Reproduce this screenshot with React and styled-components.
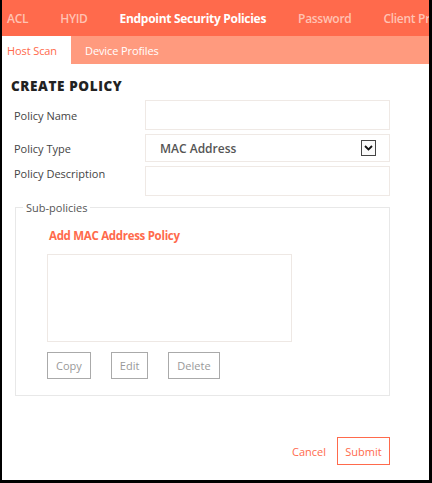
import React from "react";
import styled, { createGlobalStyle } from "styled-components";

const ORANGE = "#ff6a4c";
const PEACH = "#ff9a7e";

const GlobalStyle = createGlobalStyle`
  html, body {
    margin: 0;
    padding: 0;
    background: #fff;
  }
  * {
    box-sizing: border-box;
  }
  body {
    font-family: "Open Sans", "Noto Sans", sans-serif;
  }
`;

const Frame = styled.div`
  width: 432px;
  height: 483px;
  border-left: 2px solid #000;
  border-right: 3px solid #000;
  border-bottom: 3px solid #000;
  background: #fff;
  overflow: hidden;
  display: flex;
  flex-direction: column;
`;

const TopNav = styled.nav`
  height: 36px;
  background: ${ORANGE};
  display: flex;
  align-items: center;
  gap: 32px;
  padding: 0 5px;
  white-space: nowrap;
  overflow: hidden;
`;

const NavItem = styled.span`
  font-size: 12px;
  letter-spacing: -0.3px;
  font-weight: ${(p) => (p.$active ? 700 : 600)};
  color: ${(p) => (p.$active ? "#fff" : "#ffc2b3")};
`;

const SubNav = styled.div`
  height: 28px;
  background: ${PEACH};
  display: flex;
`;

const SubTab = styled.span`
  display: flex;
  align-items: center;
  padding: 0 14px;
  font-size: 11px;
  letter-spacing: -0.1px;
  color: ${(p) => (p.$active ? ORANGE : "#fff")};
  background: ${(p) => (p.$active ? "#fff" : "transparent")};
  &:first-child {
    padding-left: 5px;
  }
`;

const Form = styled.form`
  flex: 1;
  display: flex;
  flex-direction: column;
  padding: 14px 39px 0 12px;
`;

const Title = styled.h2`
  margin: 0 0 6px -3px;
  font-size: 13.5px;
  font-weight: 800;
  letter-spacing: 0.6px;
  color: #222;
  line-height: 16px;
`;

const Fields = styled.div`
  display: grid;
  grid-template-columns: 131px 1fr;
  row-gap: 4px;
`;

const Label = styled.label`
  font-size: 11px;
  color: #444;
  align-self: ${(p) => (p.$top ? "start" : "center")};
`;

const TextInput = styled.div`
  height: 30px;
  border: 1px solid #efe9e5;
  background: #fff;
`;

const Select = styled.div`
  height: 28px;
  border: 1px solid #efe9e5;
  display: flex;
  align-items: center;
  justify-content: space-between;
  padding: 0 13px 0 14px;
  font-size: 12px;
  font-weight: 600;
  color: #555;
`;

const Caret = styled.span`
  width: 15px;
  height: 16px;
  border: 1px solid #444;
  display: flex;
  align-items: center;
  justify-content: center;
  background: #fafafa;
`;

const Fieldset = styled.fieldset`
  margin: 4px 0 0 1px;
  padding: 0;
  border: 1px solid #e8e8e8;
  height: 196px;
`;

const Legend = styled.legend`
  margin-left: 7px;
  padding: 0 3px;
  font-size: 11px;
  color: #555;
`;

const SubBody = styled.div`
  padding: 17px 0 0 33px;
`;

const SubHeading = styled.div`
  font-size: 11.5px;
  letter-spacing: -0.3px;
  font-weight: 700;
  color: ${ORANGE};
  margin: -4px 0 10px 0;
  line-height: 16px;
`;

const ListBox = styled.div`
  width: 245px;
  height: 88px;
  margin-left: -2px;
  border: 1px solid #eee8e4;
`;

const ButtonRow = styled.div`
  display: flex;
  gap: 20px;
  margin: 10px 0 0 -2px;
`;

const GhostButton = styled.button`
  height: 27px;
  padding: 0 8px;
  border: 1px solid #aaa;
  background: #fff;
  color: #999;
  font-family: inherit;
  font-size: 11px;
`;

const Actions = styled.div`
  display: flex;
  justify-content: flex-end;
  align-items: center;
  gap: 11px;
  margin-top: 41px;
`;

const LinkButton = styled.button`
  border: none;
  background: none;
  padding: 0;
  color: ${ORANGE};
  font-family: inherit;
  font-size: 11px;
`;

const SubmitButton = styled.button`
  height: 28px;
  width: 53px;
  border: 1px solid ${ORANGE};
  background: #fff;
  color: ${ORANGE};
  font-family: inherit;
  font-size: 11px;
`;

const navItems = ["ACL", "HYID", "Endpoint Security Policies", "Password", "Client Profiles"];

export default function App() {
  return (
    <>
      <GlobalStyle />
      <Frame>
        <TopNav>
          {navItems.map((n) => (
            <NavItem key={n} $active={n === "Endpoint Security Policies"}>
              {n}
            </NavItem>
          ))}
        </TopNav>
        <SubNav>
          <SubTab $active>Host Scan</SubTab>
          <SubTab>Device Profiles</SubTab>
        </SubNav>
        <Form onSubmit={(e) => e.preventDefault()}>
          <Title>CREATE POLICY</Title>
          <Fields>
            <Label>Policy Name</Label>
            <TextInput />
            <Label>Policy Type</Label>
            <Select>
              MAC Address
              <Caret>
                <svg width="9" height="6" viewBox="0 0 9 6">
                  <path d="M1 1l3.5 3.5L8 1" stroke="#111" strokeWidth="1.8" fill="none" />
                </svg>
              </Caret>
            </Select>
            <Label $top>Policy Description</Label>
            <TextInput />
          </Fields>
          <Fieldset>
            <Legend>Sub-policies</Legend>
            <SubBody>
              <SubHeading>Add MAC Address Policy</SubHeading>
              <ListBox />
              <ButtonRow>
                <GhostButton type="button">Copy</GhostButton>
                <GhostButton type="button">Edit</GhostButton>
                <GhostButton type="button">Delete</GhostButton>
              </ButtonRow>
            </SubBody>
          </Fieldset>
          <Actions>
            <LinkButton type="button">Cancel</LinkButton>
            <SubmitButton type="submit">Submit</SubmitButton>
          </Actions>
        </Form>
      </Frame>
    </>
  );
}
